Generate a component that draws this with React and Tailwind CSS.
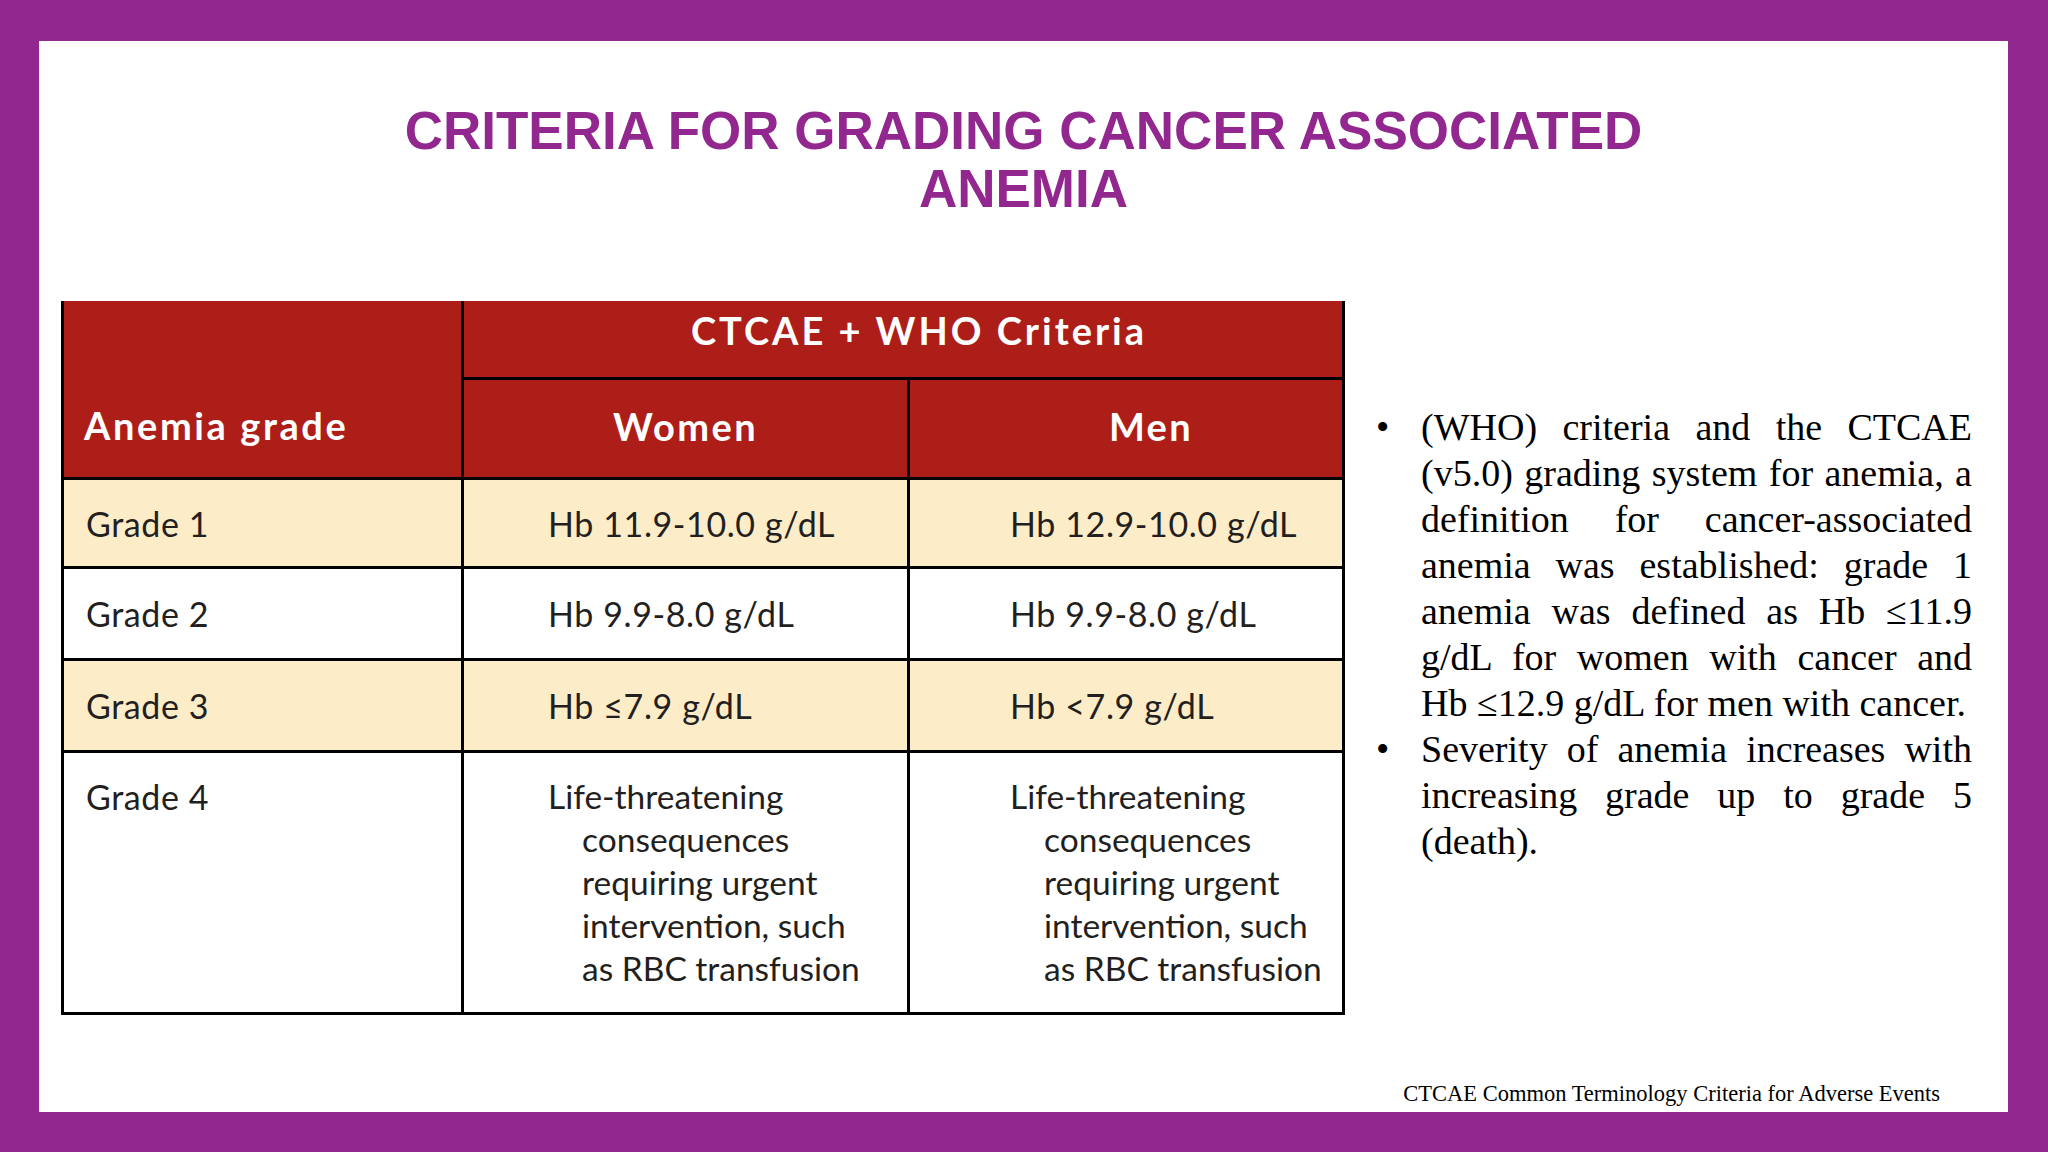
const rows = [
  { grade: 'Grade 1', women: 'Hb 11.9-10.0 g/dL', men: 'Hb 12.9-10.0 g/dL', shade: true },
  { grade: 'Grade 2', women: 'Hb 9.9-8.0 g/dL', men: 'Hb 9.9-8.0 g/dL', shade: false },
  { grade: 'Grade 3', women: 'Hb ≤7.9 g/dL', men: 'Hb <7.9 g/dL', shade: true },
]

const grade4Lines = ['consequences', 'requiring urgent', 'intervention, such', 'as RBC transfusion']

function LifeThreatening({ pad }) {
  return (
    <div className={`bg-white pt-[22px] text-[33.5px] leading-[43px] ${pad}`}>
      <div>Life-threatening</div>
      {grade4Lines.map((line) => (
        <div key={line} className="pl-[34px]">
          {line}
        </div>
      ))}
    </div>
  )
}

function GradeTable() {
  return (
    <div className="grid w-[1284px] shrink-0 grid-cols-[397px_443px_432px] grid-rows-[76px_97px_86px_89px_89px_259px] gap-[3px] bg-black px-[3px] pb-[3px] font-['Lato',sans-serif] text-[34px] text-[#231f20]">
      <div className="row-span-2 flex items-end bg-[#ad1e19] pb-[23px] pl-[20px] text-[38px] font-bold tracking-[2.6px] text-white">
        Anemia grade
      </div>
      <div className="col-span-2 flex items-center justify-center bg-[#ad1e19] pb-[17px] pl-[32px] text-[38px] font-bold tracking-[3px] text-white">
        CTCAE + WHO Criteria
      </div>
      <div className="flex items-center justify-center bg-[#ad1e19] pb-[4px] text-[38px] font-bold tracking-[2.4px] text-white">
        Women
      </div>
      <div className="flex items-center justify-center bg-[#ad1e19] pb-[4px] pl-[50px] text-[38px] font-bold tracking-[2.4px] text-white">
        Men
      </div>

      {rows.map((r) => {
        const bg = r.shade ? 'bg-[#fdecc8]' : 'bg-white'
        return [
          <div key={r.grade + 'g'} className={`flex items-center pl-[22px] tracking-[0.6px] ${bg}`}>
            {r.grade}
          </div>,
          <div key={r.grade + 'w'} className={`flex items-center pl-[84px] tracking-[0.6px] ${bg}`}>
            {r.women}
          </div>,
          <div key={r.grade + 'm'} className={`flex items-center pl-[100px] tracking-[0.6px] ${bg}`}>
            {r.men}
          </div>,
        ]
      })}

      <div className="bg-white pl-[22px] pt-[22px] leading-[43px] tracking-[0.6px]">Grade 4</div>
      <LifeThreatening pad="pl-[84px]" />
      <LifeThreatening pad="pl-[100px]" />
    </div>
  )
}

function Notes() {
  const items = [
    '(WHO) criteria and the CTCAE (v5.0) grading system for anemia, a definition for cancer-associated anemia was established: grade 1 anemia was defined as Hb ≤11.9 g/dL for women with cancer and Hb ≤12.9 g/dL for men with cancer.',
    'Severity of anemia increases with increasing grade up to grade 5 (death).',
  ]
  return (
    <ul className="ml-[31px] mt-[103px] font-['Liberation_Serif','Times_New_Roman',serif] text-[38px] leading-[46px] text-black">
      {items.map((t) => (
        <li key={t} className="flex">
          <span className="w-[45px] shrink-0">•</span>
          <p className="w-[551px] text-justify">{t}</p>
        </li>
      ))}
    </ul>
  )
}

export default function App() {
  return (
    <div className="h-[1152px] w-[2048px] bg-[#92278f] pb-[40px] pl-[39px] pr-[40px] pt-[41px]">
      <div className="flex h-full flex-col bg-white">
        <h1 className="pt-[61px] text-center font-['Liberation_Sans',Arial,sans-serif] text-[53px] font-bold leading-[58px] text-[#92278f]">
          CRITERIA FOR GRADING CANCER ASSOCIATED
          <br />
          ANEMIA
        </h1>

        <div className="mt-[83px] flex pl-[22px]">
          <GradeTable />
          <Notes />
        </div>

        <div className="mt-auto self-end pb-[5px] pr-[68px] font-['Liberation_Serif','Times_New_Roman',serif] text-[22.5px] leading-[26px] text-black">
          CTCAE Common Terminology Criteria for Adverse Events
        </div>
      </div>
    </div>
  )
}
